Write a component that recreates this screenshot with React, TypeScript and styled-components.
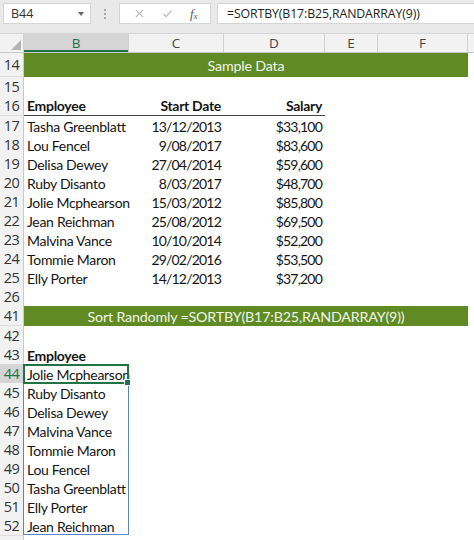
import styled, { createGlobalStyle, css } from "styled-components";

const GREEN = "#5f8a24";
const COLS = "24px 105px 95px 101px 53px 90px 1fr";

const GlobalStyle = createGlobalStyle`
  html, body {
    margin: 0;
    padding: 0;
    background: #fff;
  }
  body {
    font-family: Lato, "Open Sans", sans-serif;
    color: #141414;
  }
`;

type RowData = {
  n: number;
  name?: string;
  date?: string;
  salary?: string;
};

const sample: RowData[] = [
  { n: 17, name: "Tasha Greenblatt", date: "13/12/2013", salary: "$33,100" },
  { n: 18, name: "Lou Fencel", date: "9/08/2017", salary: "$83,600" },
  { n: 19, name: "Delisa Dewey", date: "27/04/2014", salary: "$59,600" },
  { n: 20, name: "Ruby Disanto", date: "8/03/2017", salary: "$48,700" },
  { n: 21, name: "Jolie Mcphearson", date: "15/03/2012", salary: "$85,800" },
  { n: 22, name: "Jean Reichman", date: "25/08/2012", salary: "$69,500" },
  { n: 23, name: "Malvina Vance", date: "10/10/2014", salary: "$52,200" },
  { n: 24, name: "Tommie Maron", date: "29/02/2016", salary: "$53,500" },
  { n: 25, name: "Elly Porter", date: "14/12/2013", salary: "$37,200" },
];

const sorted = [
  "Jolie Mcphearson",
  "Ruby Disanto",
  "Delisa Dewey",
  "Malvina Vance",
  "Tommie Maron",
  "Lou Fencel",
  "Tasha Greenblatt",
  "Elly Porter",
  "Jean Reichman",
];

export default function App() {
  return (
    <>
      <GlobalStyle />
      <Window>
        <FormulaBar>
          <NameBox>
            <span>B44</span>
            <Caret />
          </NameBox>
          <Grip>
            <i />
            <i />
            <i />
          </Grip>
          <ActionBox>
            <ActionIcon viewBox="0 0 12 12">
              <path d="M2 2 L10 10 M10 2 L2 10" stroke="#b9b9b9" strokeWidth="1.3" fill="none" />
            </ActionIcon>
            <ActionIcon viewBox="0 0 12 12">
              <path d="M1.5 6.5 L4.5 9.5 L10.5 2.5" stroke="#b9b9b9" strokeWidth="1.3" fill="none" />
            </ActionIcon>
            <Fx>
              f<sub>x</sub>
            </Fx>
          </ActionBox>
          <FormulaInput>=SORTBY(B17:B25,RANDARRAY(9))</FormulaInput>
        </FormulaBar>

        <HeaderRow>
          <Corner>
            <svg width="10" height="10" viewBox="0 0 10 10">
              <path d="M10 0 L10 10 L0 10 Z" fill="#b4b4b4" />
            </svg>
          </Corner>
          <ColHead $active>B</ColHead>
          <ColHead>C</ColHead>
          <ColHead>D</ColHead>
          <ColHead>E</ColHead>
          <ColHead>F</ColHead>
          <ColHead $last />
        </HeaderRow>

        <Row $h={24}>
          <RowNum>14</RowNum>
          <Band>Sample Data</Band>
        </Row>
        <Row>
          <RowNum>15</RowNum>
        </Row>
        <Row $h={20}>
          <RowNum>16</RowNum>
          <Cell $bold $underline>Employee</Cell>
          <Cell $bold $right $underline>Start Date</Cell>
          <Cell $bold $right $underline>Salary</Cell>
        </Row>
        {sample.map((r) => (
          <Row key={r.n}>
            <RowNum>{r.n}</RowNum>
            <Cell>{r.name}</Cell>
            <Cell $right $num>{r.date}</Cell>
            <Cell $right $num>{r.salary}</Cell>
          </Row>
        ))}
        <Row>
          <RowNum>26</RowNum>
        </Row>
        <Row $h={20}>
          <RowNum>41</RowNum>
          <Band>Sort Randomly =SORTBY(B17:B25,RANDARRAY(9))</Band>
        </Row>
        <Row>
          <RowNum>42</RowNum>
        </Row>
        <Row>
          <RowNum>43</RowNum>
          <Cell $bold>Employee</Cell>
        </Row>
        <SpillGroup>
          {sorted.map((name, i) => (
            <Row key={name}>
              <RowNum $active={i === 0}>{44 + i}</RowNum>
              <Cell>{name}</Cell>
            </Row>
          ))}
          <SpillOutline />
          <ActiveCell>
            <FillHandle />
          </ActiveCell>
        </SpillGroup>
        <Row>
          <RowNum />
        </Row>
      </Window>
    </>
  );
}

const Window = styled.div`
  width: 474px;
  height: 540px;
  overflow: hidden;
  background: #fff;
`;

const FormulaBar = styled.div`
  display: flex;
  align-items: center;
  height: 34px;
  padding: 0 0 6px 3px;
  box-sizing: border-box;
  background: #e9e9e9;
  border-bottom: 1px solid #d6d6d6;
`;

const boxBase = css`
  height: 21px;
  background: #fff;
  border: 1px solid #d4d4d4;
  box-sizing: border-box;
  display: flex;
  align-items: center;
`;

const NameBox = styled.div`
  ${boxBase};
  width: 88px;
  justify-content: space-between;
  padding: 0 6px 0 7px;
  font-family: "Open Sans", sans-serif;
  font-size: 12.5px;
  color: #333;
`;

const Caret = styled.span`
  width: 0;
  height: 0;
  border-left: 3.5px solid transparent;
  border-right: 3.5px solid transparent;
  border-top: 4px solid #666;
`;

const Grip = styled.div`
  width: 28px;
  display: flex;
  flex-direction: column;
  align-items: center;
  gap: 2px;

  i {
    display: block;
    width: 2px;
    height: 2px;
    background: #a8a8a8;
  }
`;

const ActionBox = styled.div`
  ${boxBase};
  width: 92px;
  justify-content: space-around;
  padding: 0 4px 0 6px;
`;

const ActionIcon = styled.svg`
  width: 11px;
  height: 11px;
`;

const Fx = styled.span`
  font-family: "Liberation Serif", serif;
  font-style: italic;
  font-size: 13px;
  color: #555;

  sub {
    font-size: 9px;
    vertical-align: -1px;
  }
`;

const FormulaInput = styled.div`
  ${boxBase};
  flex: 1;
  margin-left: 6px;
  border-right: none;
  padding-left: 9px;
  font-family: "Open Sans", sans-serif;
  font-size: 12.3px;
  letter-spacing: -0.1px;
  color: #222;
`;

const HeaderRow = styled.div`
  display: grid;
  grid-template-columns: ${COLS};
  height: 18px;
  background: #f2f2f2;
  border-bottom: 1px solid #c9c9c9;
`;

const Corner = styled.div`
  display: flex;
  align-items: flex-end;
  justify-content: flex-end;
  padding: 0 2px 2px 0;
  border-right: 1px solid #d0d0d0;
`;

const ColHead = styled.div<{ $active?: boolean; $last?: boolean }>`
  display: flex;
  align-items: center;
  justify-content: center;
  font-family: "Open Sans", sans-serif;
  font-size: 13.5px;
  color: ${(p) => (p.$active ? "#217346" : "#444")};
  background: ${(p) => (p.$active ? "#d5d5d5" : "transparent")};
  border-right: ${(p) => (p.$last ? "none" : "1px solid #d0d0d0")};
  box-shadow: ${(p) => (p.$active ? "inset 0 -2px 0 #217346" : "none")};
`;

const Row = styled.div<{ $h?: number }>`
  display: grid;
  grid-template-columns: ${COLS};
  height: ${(p) => p.$h ?? 19}px;
`;

const RowNum = styled.div<{ $active?: boolean }>`
  display: flex;
  align-items: center;
  justify-content: center;
  font-family: "Open Sans", sans-serif;
  font-size: 14.5px;
  letter-spacing: -0.6px;
  color: ${(p) => (p.$active ? "#217346" : "#333")};
  background: ${(p) => (p.$active ? "#d5d5d5" : "#f2f2f2")};
  border-right: 1px solid #c9c9c9;
  border-bottom: 1px solid #dedede;
  box-sizing: border-box;
`;

const Band = styled.div`
  grid-column: 2 / 7;
  display: flex;
  align-items: center;
  justify-content: center;
  background: ${GREEN};
  color: #f1f5e8;
  font-size: 14.3px;
  letter-spacing: -0.2px;
`;

const Cell = styled.div<{
  $bold?: boolean;
  $right?: boolean;
  $underline?: boolean;
  $num?: boolean;
}>`
  display: flex;
  align-items: center;
  justify-content: ${(p) => (p.$right ? "flex-end" : "flex-start")};
  padding: 0 3px;
  font-size: 14px;
  letter-spacing: ${(p) => (p.$num ? "-0.8px" : "-0.3px")};
  font-weight: ${(p) => (p.$bold ? 700 : 400)};
  white-space: nowrap;
  border-bottom: ${(p) => (p.$underline ? "1px solid #444" : "none")};
  box-sizing: border-box;
`;

const SpillGroup = styled.div`
  position: relative;
`;

const SpillOutline = styled.div`
  position: absolute;
  left: 23px;
  top: 0;
  width: 106px;
  height: 100%;
  border: 1px solid #5b83c7;
  box-sizing: border-box;
  pointer-events: none;
`;

const ActiveCell = styled.div`
  position: absolute;
  left: 23px;
  top: 0;
  width: 106px;
  height: 20px;
  border: 2px solid #217346;
  box-sizing: border-box;
`;

const FillHandle = styled.div`
  position: absolute;
  right: -4px;
  bottom: -4px;
  width: 5px;
  height: 5px;
  background: #217346;
  border: 1px solid #fff;
`;
